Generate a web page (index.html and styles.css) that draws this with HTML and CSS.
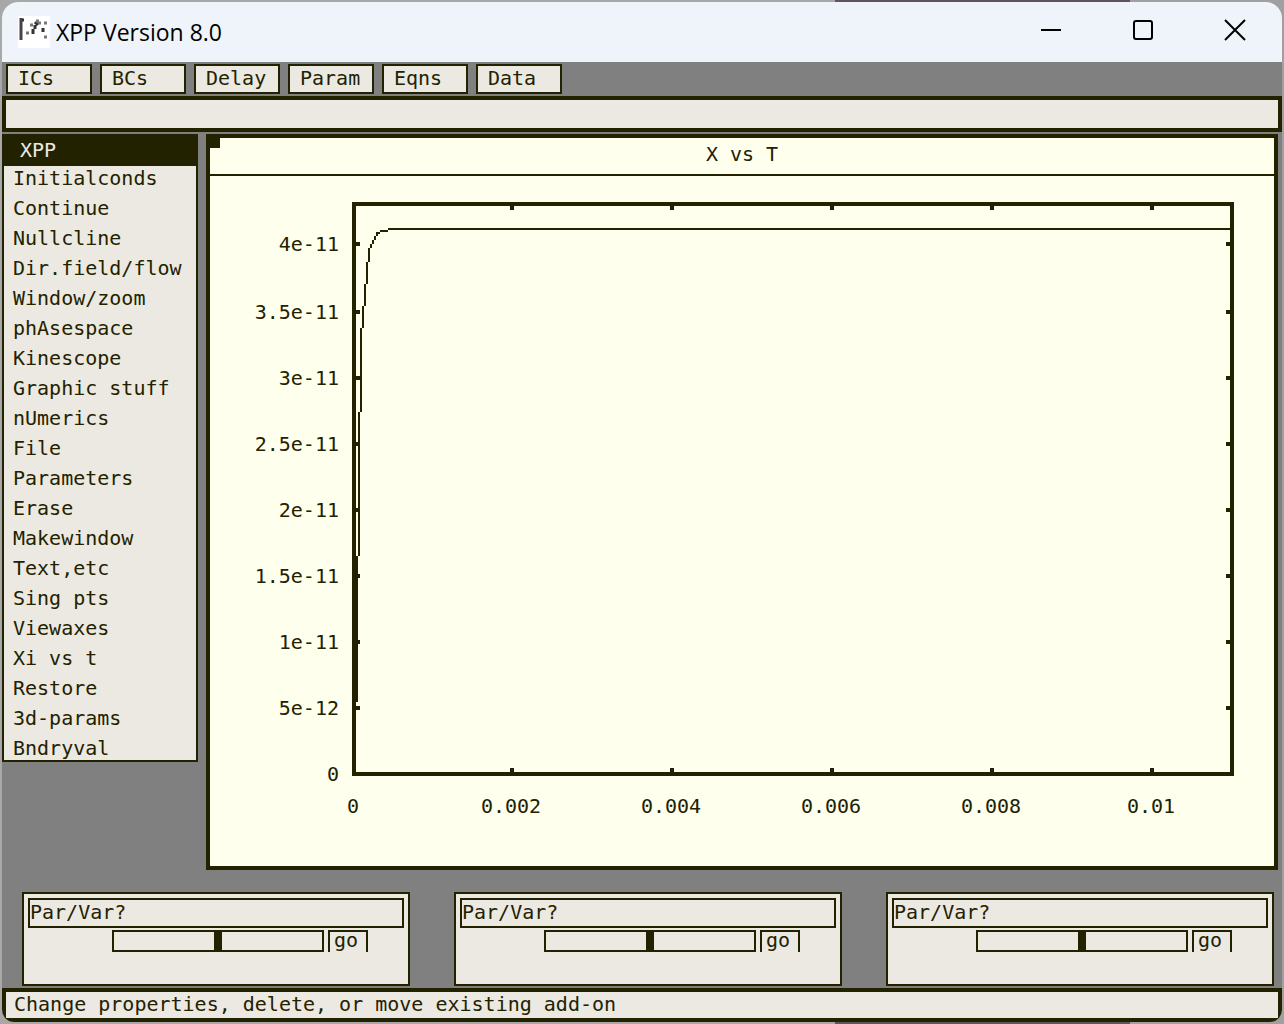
FILE: index.html
```html
<!DOCTYPE html>
<html lang="en">
<head>
    <meta charset="UTF-8">
    <title>XPP Version 8.0</title>
    <link rel="stylesheet" href="styles.css">
</head>
<body>
<div class="window">
    <header class="titlebar">
        <svg class="logo" width="32" height="32" viewBox="0 0 32 32">
            <rect width="32" height="32" fill="#fff"/>
            <path d="M3 2v22" stroke="#444" stroke-width="3"/>
            <path d="M4 4h2M17 6l3 3M17 9v4M15 13v5M25 12v4" stroke="#333" stroke-width="3"/>
            <path d="M12 9h3M8 17h3M18 5h3M20 7h3M26 7h3M26 21h3" stroke="#777" stroke-width="3"/>
        </svg>
        <h1 class="caption">XPP Version 8.0</h1>
        <button class="winbtn" aria-label="Minimize">
            <svg width="22" height="22" viewBox="0 0 22 22"><path d="M1 11h20" stroke="#000" stroke-width="2"/></svg>
        </button>
        <button class="winbtn" aria-label="Maximize">
            <svg width="22" height="22" viewBox="0 0 22 22"><rect x="2" y="2" width="18" height="18" rx="2" fill="none" stroke="#000" stroke-width="2"/></svg>
        </button>
        <button class="winbtn" aria-label="Close">
            <svg width="22" height="22" viewBox="0 0 22 22"><path d="M1 1l20 20M21 1L1 21" stroke="#000" stroke-width="2"/></svg>
        </button>
    </header>

    <nav class="toolbar">
        <button class="tool">ICs</button>
        <button class="tool">BCs</button>
        <button class="tool">Delay</button>
        <button class="tool">Param</button>
        <button class="tool">Eqns</button>
        <button class="tool">Data</button>
    </nav>

    <input class="command" type="text" aria-label="Command">

    <main class="main">
        <nav class="menu">
            <h2 class="menu-title">XPP</h2>
            <div class="menu-items">
                <button class="item">Initialconds</button>
                <button class="item">Continue</button>
                <button class="item">Nullcline</button>
                <button class="item">Dir.field/flow</button>
                <button class="item">Window/zoom</button>
                <button class="item">phAsespace</button>
                <button class="item">Kinescope</button>
                <button class="item">Graphic stuff</button>
                <button class="item">nUmerics</button>
                <button class="item">File</button>
                <button class="item">Parameters</button>
                <button class="item">Erase</button>
                <button class="item">Makewindow</button>
                <button class="item">Text,etc</button>
                <button class="item">Sing pts</button>
                <button class="item">Viewaxes</button>
                <button class="item">Xi vs t</button>
                <button class="item">Restore</button>
                <button class="item">3d-params</button>
                <button class="item">Bndryval</button>
            </div>
        </nav>

        <section class="plot">
            <h2 class="plot-title">X vs T</h2>
            <svg class="chart" viewBox="0 0 1064 690">
                <rect class="axes" x="144" y="28" width="878" height="570"/>
                <!-- ticks, left and right -->
                <path class="axes" d="M146 68h4M146 136h4M146 202h4M146 268h4M146 334h4M146 400h4M146 466h4M146 532h4"/>
                <path class="axes" d="M1016 68h4M1016 136h4M1016 202h4M1016 268h4M1016 334h4M1016 400h4M1016 466h4M1016 532h4"/>
                <!-- ticks, top and bottom -->
                <path class="axes" d="M302 30v4M462 30v4M622 30v4M782 30v4M942 30v4"/>
                <path class="axes" d="M302 592v4M462 592v4M622 592v4M782 592v4M942 592v4"/>
                <path class="curve" d="M147 526V380M149 380V236M151 236V152M153 152V130M155 130V108M157 108V86M159 86V72M161 72V68M163 68V64M165 64V60M167 60V56M168 57h2M170 55h8M178 53H1022"/>
                <g class="ylabels">
                    <text x="129" y="75">4e-11</text>
                    <text x="129" y="143">3.5e-11</text>
                    <text x="129" y="209">3e-11</text>
                    <text x="129" y="275">2.5e-11</text>
                    <text x="129" y="341">2e-11</text>
                    <text x="129" y="407">1.5e-11</text>
                    <text x="129" y="473">1e-11</text>
                    <text x="129" y="539">5e-12</text>
                    <text x="129" y="605">0</text>
                </g>
                <g class="xlabels">
                    <text x="143" y="637">0</text>
                    <text x="301" y="637">0.002</text>
                    <text x="461" y="637">0.004</text>
                    <text x="621" y="637">0.006</text>
                    <text x="781" y="637">0.008</text>
                    <text x="941" y="637">0.01</text>
                </g>
            </svg>
        </section>
    </main>

    <section class="sliders">
        <div class="slider">
            <button class="par">Par/Var?</button>
            <div class="row">
                <input class="range" type="range" aria-label="Parameter 1">
                <button class="go">go</button>
            </div>
        </div>
        <div class="slider">
            <button class="par">Par/Var?</button>
            <div class="row">
                <input class="range" type="range" aria-label="Parameter 2">
                <button class="go">go</button>
            </div>
        </div>
        <div class="slider">
            <button class="par">Par/Var?</button>
            <div class="row">
                <input class="range" type="range" aria-label="Parameter 3">
                <button class="go">go</button>
            </div>
        </div>
    </section>

    <footer class="status">Change properties, delete, or move existing add-on</footer>
</div>
</body>
</html>
```
FILE: styles.css
```css
* {
    box-sizing: border-box;
}

body {
    margin: 0;
    padding: 2px;
    background: linear-gradient(90deg, #a8a8a8 65%, #5c565c 65%, #5c565c 88%, #a0a0a0 88%);
    color: #222200;
    font: 20px/24px "DejaVu Sans Mono", monospace;
}

h1, h2 {
    margin: 0;
    font-size: 20px;
    font-weight: normal;
}

button, input {
    margin: 0;
    padding: 0;
    border: 0;
    border-radius: 0;
    background: none;
    color: inherit;
    font: inherit;
    text-align: left;
}

.window {
    background: #808080;
    border-radius: 16px 16px 12px 12px;
    overflow: hidden;
}

.titlebar {
    display: flex;
    align-items: center;
    height: 60px;
    padding-left: 16px;
    background: #eef4f9;
    color: #000;
}

.logo {
    margin-right: 6px;
}

.caption {
    flex: 1;
    font: 23px/32px "Open Sans", sans-serif;
}

.winbtn {
    display: flex;
    align-items: center;
    justify-content: center;
    width: 92px;
    height: 60px;
    padding: 0 2px 4px 0;
}

.toolbar {
    display: flex;
    gap: 8px;
    padding: 2px 4px;
}

.tool {
    width: 86px;
    height: 30px;
    padding: 0 0 2px 10px;
    border: 2px solid #222200;
    background: #ece9e2;
}

.command {
    display: block;
    width: 100%;
    height: 36px;
    padding: 0 8px;
    border: 4px solid #222200;
    background: #ece9e2;
}

.main {
    display: flex;
    align-items: flex-start;
    gap: 8px;
    padding: 2px 4px 0 0;
}

.menu {
    width: 196px;
    border: 2px solid #222200;
    border-top: 0;
    background: #ece9e2;
}

.menu-title {
    padding-left: 16px;
    background: #222200;
    color: #ece9e2;
    line-height: 32px;
}

.menu-items {
    display: flex;
    flex-direction: column;
    gap: 6px;
}

.item {
    height: 24px;
    padding-left: 9px;
}

.plot {
    position: relative;
    flex: 1;
    border: 4px solid #222200;
    background: #ffffee;
}

/* grab corner */
.plot::before {
    content: "";
    position: absolute;
    top: 0;
    left: 0;
    width: 10px;
    height: 10px;
    background: #222200;
}

.plot-title {
    padding-bottom: 4px;
    border-bottom: 2px solid #222200;
    line-height: 32px;
    text-align: center;
}

.chart {
    display: block;
    width: 100%;
}

.axes {
    fill: none;
    stroke: #222200;
    stroke-width: 4px;
}

.curve {
    fill: none;
    stroke: #222200;
    stroke-width: 2px;
}

.chart text {
    fill: #222200;
}

.ylabels {
    text-anchor: end;
}

.xlabels {
    text-anchor: middle;
}

.sliders {
    display: flex;
    gap: 44px;
    padding: 22px 8px 2px 20px;
}

.slider {
    flex: 1;
    height: 94px;
    padding: 4px;
    border: 2px solid #222200;
    background: #ece9e2;
}

.par {
    display: block;
    width: 100%;
    height: 30px;
    padding-bottom: 2px;
    border: 2px solid #222200;
}

.row {
    display: flex;
    justify-content: flex-end;
    gap: 4px;
    padding: 2px 36px 0 0;
}

.range {
    width: 212px;
    height: 22px;
    border: 2px solid #222200;
    appearance: none;
}

.range::-webkit-slider-thumb {
    width: 8px;
    height: 18px;
    border: 0;
    background: #222200;
    appearance: none;
}

.go {
    width: 40px;
    height: 22px;
    padding: 0 0 4px 4px;
    border: 2px solid #222200;
    border-bottom: 0;
    line-height: 16px;
}

.status {
    padding: 0 8px 2px;
    border: 4px solid #222200;
    background: #ece9e2;
}
```
